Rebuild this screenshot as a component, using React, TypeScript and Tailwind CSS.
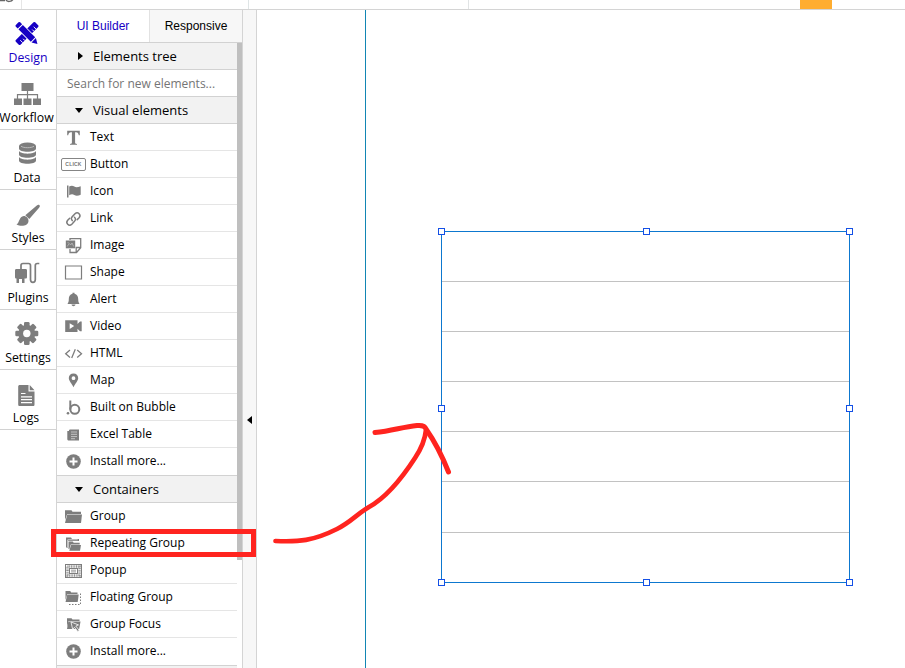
import React from 'react';

const G = '#7d7d7d';

type RowProps = { label: string; icon: React.ReactNode; last?: boolean };

const Svg = ({ w, h, children, className = '' }: { w: number; h: number; children: React.ReactNode; className?: string }) => (
  <svg width={w} height={h} viewBox={`0 0 ${w} ${h}`} fill={G} className={`shrink-0 ${className}`}>
    {children}
  </svg>
);

const Plus = () => (
  <Svg w={27} h={26}>
    <circle cx="13.5" cy="13.5" r="7.3" />
    <path d="M9.5 13.5h8M13.5 9.500v8" stroke="#fff" strokeWidth="2" />
  </Svg>
);

const visual: RowProps[] = [
  { label: 'Text', icon: <Svg w={27} h={26}><path d="M7.200 6.800h12.600v4.400h-1c-.4-2.100-1-3-2.800-3h-.9v10.300c0 1 .4 1.300 1.900 1.400v.9h-7v-.9c1.500-.1 1.900-.4 1.900-1.400V8.200H11c-1.800 0-2.400.9-2.800 3h-1z" /></Svg> },
  {
    label: 'Button',
    icon: (
      <span className="flex h-[13px] w-[25px] items-center justify-center rounded-[2px] border border-[#858585] pt-px font-['Liberation_Sans',sans-serif] text-[5px] leading-none font-bold tracking-[0.2px] text-[#777]">
        CLICK
      </span>
    ),
  },
  { label: 'Icon', icon: <Svg w={27} h={26}><path d="M7 7.500h1.500v12H7zM9.200 8.600c2-1.200 3.700-1 5.100 0s3.400.9 6.400-.3v8.400c-2.600 1.200-4.700 1.300-6.400.3s-3.200-.8-5.100.2z" /></Svg> },
  {
    label: 'Link',
    icon: (
      <Svg w={27} h={26}>
        <g fill="none" stroke={G} strokeWidth="1.5" strokeLinecap="round">
          <path d="M12.300 15.600c-1.300-1.200-1.200-2.800 0-4l2.700-2.800c1.300-1.300 3-1.200 4.100-.1s1.100 2.700 0 4l-1.900 1.900" />
          <path d="M14.500 12.300c1.300 1.200 1.300 2.800 0 4l-2.700 2.900c-1.300 1.300-3 1.200-4.100.1s-1.100-2.700 0-4l2-2" />
        </g>
      </Svg>
    ),
  },
  {
    label: 'Image',
    icon: (
      <Svg w={27} h={26}>
        <path d="M10 8V6.700h10.700v9.100l-4.200 4.700H10V17M20.500 15.500h-4.300v4.500" fill="none" stroke={G} strokeWidth="1.300" />
        <path d="M5.800 8.500h9.400v7.800H5.800z" />
        <path d="M7.200 14.500l2-3 1.500 1.500 1.300-2 1.700 3.500M7.500 10.700h1.200" fill="none" stroke="#ccc" strokeWidth=".6" />
      </Svg>
    ),
  },
  { label: 'Shape', icon: <Svg w={27} h={26}><path d="M5.500 7h16v13h-16z" fill="none" stroke={G} strokeWidth="1.200" /></Svg> },
  { label: 'Alert', icon: <Svg w={27} h={26}><path d="M12.500 6.800h2v1c2.700.6 3.700 2.700 3.700 5.200 0 2.400.3 3.400 1.300 4.900h-12c1-1.500 1.300-2.500 1.300-4.900 0-2.500 1-4.600 3.700-5.200zM11.500 18.500h4c-.4 2.200-3.600 2.200-4 0z" /></Svg> },
  { label: 'Video', icon: <Svg w={27} h={26}><path d="M5.200 7.200h12.300V11l2.500-2.500h1.700v9.700H20l-2.500-2.500v3.400H5.200z" /><path d="M9.700 10.300l4.500 2.800-4.500 2.900z" fill="#fff" /></Svg> },
  { label: 'HTML', icon: <Svg w={27} h={26}><path d="M10 10l-4.300 3.700 4.300 3.700M17.200 10l4.300 3.700-4.300 3.700M15.300 9.300l-3.600 8.800" fill="none" stroke={G} strokeWidth="1.300" /></Svg> },
  { label: 'Map', icon: <Svg w={27} h={26}><path fillRule="evenodd" d="M13.500 6.500c2.800 0 4.700 2 4.700 4.600 0 2.800-2.800 5.200-4.700 9.100-1.900-3.900-4.700-6.300-4.700-9.100 0-2.600 1.900-4.600 4.700-4.600zm0 2.800a1.900 1.900 0 1 0 0 3.800 1.900 1.900 0 0 0 0-3.800z" /></Svg> },
  {
    label: 'Built on Bubble',
    icon: (
      <Svg w={27} h={26}>
        <path d="M10.300 6.500v9" stroke={G} strokeWidth="2" />
        <circle cx="14.800" cy="15.300" r="4.500" fill="none" stroke={G} strokeWidth="2" />
        <circle cx="8" cy="19.300" r="1.300" />
      </Svg>
    ),
  },
  { label: 'Excel Table', icon: <Svg w={27} h={26}><path d="M9.700 8.500h9.300v11H9c-1 0-1.700-.5-1.700-1.500V10h1.700v-.8z" /><path d="M11 11h6M11 13.300h6M11 15.600h6M11 17.700h4" stroke="#ccc" strokeWidth=".9" /></Svg> },
  { label: 'Install more...', icon: <Plus />, last: true },
];

const containers: RowProps[] = [
  { label: 'Group', icon: <Svg w={27} h={26}><path d="M5 7.200h6.500l1 1.500h8.500v2.200H7.200L5 17z" /><path d="M7.200 11.500h14.800l-1 8.500H5z" /></Svg> },
  {
    label: 'Repeating Group',
    icon: (
      <Svg w={27} h={26}>
        <path d="M6 7.500h5l1 1.400h7V11H8v6.500H6z" />
        <path d="M8.500 11.500H12.700l1 1.200h6V14.500h-9l-1.300 4.500H8.500z" />
        <path d="M7.700 17V9.800h10" fill="none" stroke="#e8e8e8" strokeWidth=".8" />
        <path d="M11 14.900h10l-1 5.900H9.300z" />
      </Svg>
    ),
  },
  {
    label: 'Popup',
    icon: (
      <Svg w={27} h={26}>
        <rect x="5.500" y="7.500" width="16" height="13" fill="none" stroke={G} />
        <rect x="7.500" y="9.500" width="12" height="9" fill="none" stroke="#919191" strokeWidth="2.500" strokeDasharray="1 .7" />
        <rect x="9.500" y="11.500" width="8" height="5" fill="#fff" stroke={G} />
        <path d="M11 13.200h5M11 14.900h5" stroke={G} strokeWidth=".8" />
      </Svg>
    ),
  },
  {
    label: 'Floating Group',
    icon: (
      <Svg w={27} h={26}>
        <path d="M5.500 7h4.700l1 1.400h6.300V10H7.300L5.500 16z" />
        <path d="M7.300 10.500h11.400l-1 7.500H5.500z" />
        <path d="M20.500 9.500v11H9" fill="none" stroke={G} strokeDasharray="1.500 1.500" />
      </Svg>
    ),
  },
  {
    label: 'Group Focus',
    icon: (
      <Svg w={27} h={26}>
        <path d="M7 7.200h4.500l1 1.300h7V10H8.500L7 16z" />
        <path d="M8.300 10.500h12.200l-1.400 7.500H7z" />
        <path d="M11 11l7.500 2.900-2.700 1.200 3.500 4.200-1.500 1.200-3.400-4.200-1.700 2.200z" stroke="#fff" strokeWidth=".8" />
      </Svg>
    ),
  },
  { label: 'Install more...', icon: <Plus />, last: true },
];

const Row = ({ label, icon, last }: RowProps) => (
  <div className={`flex shrink-0 items-start border-b text-[12px] ${last ? 'h-7 border-[#d2d2d2]' : 'h-[27px] border-[#e5e5e5]'}`}>
    <span className="flex h-[26px] w-[33px] shrink-0 items-center justify-center">{icon}</span>
    <span className="leading-[26px] whitespace-nowrap">{label}</span>
  </div>
);

const Header = ({ label, open }: { label: string; open?: boolean }) => (
  <div className="flex h-[27px] shrink-0 items-center border-b border-[#d2d2d2] bg-[#f2f2f2] text-[13px]">
    <span className="flex w-9 justify-center pl-2">
      {open ? (
        <svg width="8" height="5" className="mr-px"><path d="M0 0h8L4 5z" /></svg>
      ) : (
        <svg width="5" height="8" className="ml-[3px]"><path d="M0 0l5 4-5 4z" /></svg>
      )}
    </span>
    <span className="leading-[26px] whitespace-nowrap">{label}</span>
  </div>
);

const nav = [
  {
    label: 'Design',
    active: true,
    shift: 'pl-0',
    icon: (
      <svg width="28" height="28" viewBox="0 0 28 28" fill="#1600c4">
        <g transform="translate(14 14.500) rotate(-45)">
          <path d="M-12.500-3.300h25a1.200 1.200 0 0 1 1.200 1.200v4.200a1.200 1.200 0 0 1-1.200 1.200h-25a1.200 1.200 0 0 1-1.200-1.200v-4.200a1.200 1.200 0 0 1 1.200-1.200z" />
          <path d="M-9.500 0v3.500M-6.500 1v2.500M6.500 1v2.500M9.500 0v3.500" stroke="#fff" strokeWidth=".9" />
        </g>
        <g transform="translate(14 14.500) rotate(45)">
          <path d="M-10-3.900H9.500L15 0 9.500 3.900H-10z" fill="#fff" />
          <path d="M-12.700-3.100h2.700v6.200h-2.700a1.200 1.200 0 0 1-1.200-1.200v-3.800a1.200 1.200 0 0 1 1.200-1.200zM-9-3.100H8.500v6.200H-9zM9.500-3.100L14.800 0 9.500 3.100z" />
        </g>
      </svg>
    ),
  },
  {
    label: 'Workflow',
    shift: 'pr-[3px]',
    icon: (
      <svg width="28" height="28" viewBox="0 0 28 28" fill={G}>
        <path d="M8.500 4h12v8h-12zM1 19.500h8V26H1zM10.500 19.500h8V26h-8zM20 19.500h8V26h-8z" />
        <path d="M14.500 11v9M4.500 20v-4.300h20V20" fill="none" stroke={G} strokeWidth="1.200" />
      </svg>
    ),
  },
  {
    label: 'Data',
    shift: 'pr-[2px]',
    icon: (
      <svg width="28" height="28" viewBox="0 0 28 28" fill={G}>
        <ellipse cx="14.500" cy="7" rx="8.500" ry="3.500" />
        <path d="M6 7v2.500c0 4.300 17 4.300 17 0V7zM6 12c2 3.500 15 3.500 17 0v3.500c0 4.300-17 4.300-17 0zM6 18c2 3.500 15 3.500 17 0v3.500c0 4.300-17 4.300-17 0z" />
        <path d="M8 7.200c2.500 2 10.500 2 13 0" fill="none" stroke="#c9c9c9" strokeWidth=".8" />
      </svg>
    ),
  },
  {
    label: 'Styles',
    shift: 'pl-0',
    icon: (
      <svg width="28" height="28" viewBox="0 0 28 28" fill={G}>
        <path d="M26.500 6.200c.7.700.3 1.700-.4 2.500L16.300 20l-4-3.700L23.800 6.500c1-.8 2-1 2.700-.3z" />
        <path d="M10.800 17c2.300 0 4.900 2.300 4.700 4.900-.3 5.200-7.700 6-12 3.500 3-1.200 2.500-7.900 7.300-8.400z" />
      </svg>
    ),
  },
  {
    label: 'Plugins',
    shift: 'pl-0',
    icon: (
      <svg width="28" height="28" viewBox="0 0 28 28" fill={G}>
        <path d="M3.500 10h9c1 0 1.500.5 1.500 1.500V18c0 1-.5 1.500-1.500 1.500h-1V24H9v-4H6v4H3.500v-4.500C2.500 19.500 2 19 2 18v-6.500C2 10.500 2.500 10 3.500 10z" />
        <path d="M8 11V6.500c0-1.500.7-2 2-2h5.500c1.300 0 2 .7 2 2v14c0 3.700 4.800 3.700 4.800 0V6.500c0-1.500.7-2 2-2h2" fill="none" stroke={G} strokeWidth="1.700" />
      </svg>
    ),
  },
  {
    label: 'Settings',
    shift: 'pl-0',
    icon: (
      <svg width="28" height="28" viewBox="0 0 28 28" fill={G}>
        {[0, 45, 90, 135].map((a) => (
          <rect key={a} x="11" y="3" width="5.600" height="23" rx="1.300" transform={`rotate(${a} 13.800 14.500)`} />
        ))}
        <circle cx="13.800" cy="14.500" r="8.500" />
        <circle cx="13.800" cy="14.500" r="3.700" fill="#fff" />
      </svg>
    ),
  },
  {
    label: 'Logs',
    shift: 'pr-[4px]',
    icon: (
      <svg width="28" height="28" viewBox="0 0 28 28" fill={G}>
        <path d="M7 6h8.500v6.500h6v13c0 1-.5 1.500-1.500 1.500H6.700c-1 0-1.500-.5-1.500-1.500v-18c0-1 .6-1.500 1.800-1.500zM16.700 6l4.800 5.300h-4.800z" />
        <path d="M8 14.500h4.500M8 17.800h11M8 20.700h11M8 23.700h11" stroke="#fff" strokeWidth="1.200" />
      </svg>
    ),
  },
];

const handles = [
  'left-[438px] top-[228px]', 'left-[643px] top-[228px]', 'left-[846px] top-[228px]',
  'left-[438px] top-[405px]', 'left-[846px] top-[405px]',
  'left-[438px] top-[579px]', 'left-[643px] top-[579px]', 'left-[846px] top-[579px]',
];

export default function App() {
  return (
    <div className="relative flex h-[668px] w-[905px] flex-col overflow-hidden bg-white font-['Open_Sans','Noto_Sans',sans-serif] text-black">
      <div className="flex h-[10px] shrink-0 border-b border-[#d4d4d4]">
        <div className="w-[22px] border-r border-[#e6e6e6]">
          <svg width="15" height="3" fill="none" stroke="#666" strokeWidth="1.500"><path d="M0 .5h5M6 0c1 2 6 2 7-1" /></svg>
        </div>
        <div className="w-[227px] border-r border-[#dfe5e6]" />
        <div className="w-[220px] border-r border-[#e1e4e5]" />
        <div className="ml-[331px] h-[9px] w-8 bg-[#ffad30]" />
      </div>

      <div className="flex min-h-0 flex-1">
        <nav className="flex w-[57px] shrink-0 flex-col border-r border-[#d4d4d4] text-[12.300px]">
          {nav.map((n) => (
            <div key={n.label} className={`flex h-[60px] shrink-0 flex-col border-b border-[#d2d2d2] pt-[9px] ${n.active ? 'text-[#1600c4]' : ''}`}>
              <div className="flex h-7 justify-center pr-[2px]">{n.icon}</div>
              <div className={`flex justify-center leading-[21px] whitespace-nowrap ${n.shift}`}>{n.label}</div>
            </div>
          ))}
        </nav>

        <aside className="flex w-[186px] shrink-0 flex-col border-r border-[#d4d4d4]">
          <div className="flex h-[33px] shrink-0 border-b border-[#d2d2d2] font-['Liberation_Sans',sans-serif] text-[12px]">
            <div className="flex w-[92px] items-center justify-center text-[#1600c4]">UI Builder</div>
            <div className="flex flex-1 items-center justify-center border-l border-[#e2e2e2] bg-[#f7f7f7]">Responsive</div>
          </div>
          <div className="flex min-h-0 flex-1">
            <div className="flex w-[180px] shrink-0 flex-col overflow-hidden">
              <Header label="Elements tree" />
              <div className="flex h-[27px] shrink-0 items-center border-b border-[#d2d2d2] pt-[2px] pl-[10px] text-[12px] text-[#757575]">Search for new elements...</div>
              <Header label="Visual elements" open />
              {visual.map((r) => <Row key={r.label} {...r} />)}
              <Header label="Containers" open />
              {containers.map((r) => <Row key={r.label} {...r} />)}
              <div className="flex-1 bg-[#f2f2f2]" />
            </div>
            <div className="h-[517px] w-[5px] bg-[#bfbfbf]" />
          </div>
        </aside>

        <div className="flex w-[14px] shrink-0 justify-center border-r border-[#d4d4d4] bg-[#f7f7f7] pt-[406px]">
          <svg width="5" height="8"><path d="M5 0v8L0 4z" /></svg>
        </div>

        <main className="flex flex-1 pl-[108px]">
          <div className="flex-1 border-l border-[#1286b4] pt-[221px] pl-[75px]">
            <div className="flex h-[352px] w-[409px] flex-col border border-[#0d78cf]">
              {[50, 50, 50, 50, 50, 51].map((h, i) => (
                <div key={i} className="shrink-0 border-b border-[#c2c2c2]" style={{ height: h }} />
              ))}
            </div>
          </div>
        </main>
      </div>

      {handles.map((p) => (
        <span key={p} className={`absolute h-[7px] w-[7px] border border-[#1450e6] bg-white ${p}`} />
      ))}
      <div className="absolute top-[529px] left-[51px] h-[28px] w-[205px] border-5 border-[#ff241f]" />
      <svg className="absolute top-0 left-0" width="905" height="668" fill="none" stroke="#ff241f" strokeLinecap="round" strokeLinejoin="round">
        <path d="M275.500 541C299 542 313 541 337 529C351 522 357 514 369 507C389 496 404 475 415 458C421 449 425 440 426 430" strokeWidth="4.700" />
        <path d="M375 432.500C392 431 402 427 417 425.500C422 425 425 426 426 429C433 439 441 453 448.500 472" strokeWidth="5" />
      </svg>
    </div>
  );
}
